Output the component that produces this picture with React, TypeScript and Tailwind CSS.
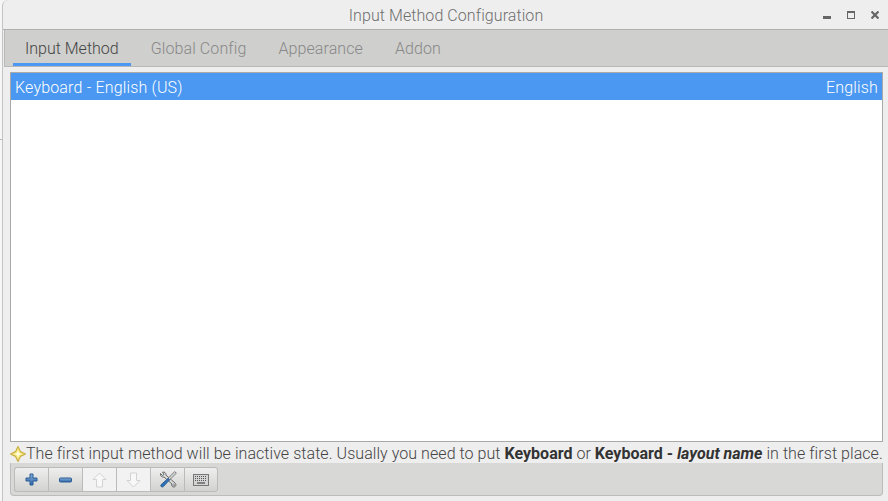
import type { ReactNode } from 'react'

const tabs = ['Input Method', 'Global Config', 'Appearance', 'Addon']

function PlusIcon() {
  return (
    <svg width="13" height="13" viewBox="0 0 13 13">
      <defs>
        <linearGradient id="blue-plus" x1="0" y1="0" x2="0" y2="1">
          <stop offset="0" stopColor="#86add8" />
          <stop offset="1" stopColor="#2c66a8" />
        </linearGradient>
      </defs>
      <path d="M5 1 H8 V5 H12 V8 H8 V12 H5 V8 H1 V5 H5 Z" fill="url(#blue-plus)" stroke="#2a5c96" strokeWidth="1" strokeLinejoin="round" />
    </svg>
  )
}

function MinusIcon() {
  return (
    <svg width="13" height="6" viewBox="0 0 13 6">
      <defs>
        <linearGradient id="blue-minus" x1="0" y1="0" x2="0" y2="1">
          <stop offset="0" stopColor="#86add8" />
          <stop offset="1" stopColor="#2c66a8" />
        </linearGradient>
      </defs>
      <rect x="0.5" y="1" width="12" height="4" rx="1" fill="url(#blue-minus)" stroke="#2a5c96" />
    </svg>
  )
}

function ArrowIcon({ down }: { down?: boolean }) {
  return (
    <svg width="15" height="16" viewBox="0 0 15 16" className={down ? 'rotate-180' : ''}>
      <path d="M7.5 1 L14 7.5 H10.5 V15 H4.5 V7.5 H1 Z" fill="#f8f8f8" stroke="#d2d2d2" strokeWidth="1" strokeLinejoin="round" />
    </svg>
  )
}

function ToolsIcon() {
  return (
    <svg width="18" height="17" viewBox="0 0 18 17">
      <path d="M1.5 2.5 L3.5 4.5 L5 3.5 L3.5 1.2 C5.5 0.5 7.2 2 7 4.2 L16 12 C17.6 13 17 16 14.8 16 C13 16 12.2 14.3 13 13 L5 6 C3 6.6 1 5 1.5 2.5 Z" fill="#dcdcdc" stroke="#6a6a6a" strokeWidth="1" strokeLinejoin="round" />
      <circle cx="14.8" cy="14" r="1" fill="#f4f4f4" stroke="#6a6a6a" strokeWidth="0.7" />
      <path d="M15.6 0.6 L17.4 2.2 L10.6 8.8 L9 7.4 Z" fill="#d4d4d4" stroke="#6a6a6a" strokeWidth="0.8" strokeLinejoin="round" />
      <path d="M9 7.4 L10.6 8.8 L4.4 15.6 C3 16.8 1 15.2 2 13.8 Z" fill="#2f73ba" stroke="#1d4f86" strokeWidth="0.8" strokeLinejoin="round" />
    </svg>
  )
}

function KeyboardIcon() {
  return (
    <svg width="16" height="12" viewBox="0 0 16 12">
      <rect x="0.5" y="0.5" width="15" height="11" fill="#d4d4d4" stroke="#777" />
      <path d="M2 2.5 H14 M2 4.5 H14 M2 6.5 H14" stroke="#555" strokeWidth="1" strokeDasharray="1 1" />
      <path d="M4 9 H12" stroke="#666" strokeWidth="1.5" />
    </svg>
  )
}

function StarIcon() {
  return (
    <svg width="16" height="16" viewBox="0 0 16 16" className="shrink-0">
      <path d="M8 0.5 L10.4 5.6 L15.5 8 L10.4 10.4 L8 15.5 L5.6 10.4 L0.5 8 L5.6 5.6 Z" fill="#f8e878" stroke="#c9b04a" strokeWidth="1.2" strokeLinejoin="round" />
      <path d="M8 4 L9 7 L12 8 L9 9 L8 12 L7 9 L4 8 L7 7 Z" fill="#fffde0" />
    </svg>
  )
}

function ToolButton({ children, disabled, first, last }: { children: ReactNode; disabled?: boolean; first?: boolean; last?: boolean }) {
  return (
    <div
      className={`flex h-[25px] w-[34px] items-center justify-center border-y border-l border-[#bbbbb9] ${first ? 'rounded-l-[3px]' : ''} ${last ? 'rounded-r-[3px] border-r' : ''} ${
        disabled ? 'bg-[#f2f2f2]' : 'bg-gradient-to-b from-[#eeeeee] to-[#d2d2d0]'
      }`}
    >
      {children}
    </div>
  )
}

export default function App() {
  return (
    <div className="flex h-[501px] w-[888px] overflow-hidden bg-[#f6f6f6] font-['Roboto',sans-serif] font-light text-[#555]">
      <div className="w-[2px] shrink-0 pt-[139px]">
        <div className="h-px bg-[#b5b5b5]" />
      </div>
      <div className="flex min-w-0 flex-1 flex-col rounded-tl-[6px] border-l border-[#c4c4c4] bg-[#eeeeee]">
        <header className="relative flex h-[30px] shrink-0 items-center justify-center border-b border-[#b0b0ae] pl-[1px] pt-[2px] text-[16px] tracking-[0.08px] text-[#6e6e6e]">
          Input Method Configuration
          <div className="absolute left-[820px] top-[11px] flex items-start gap-[16px]">
            <span className="mt-[5px] h-[3px] w-[8px] bg-[#666]" />
            <span className="h-[8px] w-[8px] border border-t-2 border-[#666]" />
            <svg width="8" height="8" viewBox="0 0 8 8">
              <path d="M0.5 0.5 L7.5 7.5 M7.5 0.5 L0.5 7.5" stroke="#666" strokeWidth="2.2" />
            </svg>
          </div>
        </header>

        <nav className="ml-[1px] flex h-[37px] shrink-0 gap-[8px] border-b border-l border-[#b8b8b6] bg-[#cfcfcd] pl-[8px]">
          {tabs.map((tab, i) => (
            <div
              key={tab}
              className={`flex h-full items-center px-[12px] text-[16px] ${i === 0 ? 'border-b-[3px] border-[#4a98f2] pt-[4px] text-[#444]' : 'pt-[1px] tracking-[0.1px] text-[#888]'}`}
            >
              {tab}
            </div>
          ))}
        </nav>

        <main className="flex min-h-0 flex-1 flex-col pl-[7px] pr-[5px] pt-[5px]">
          <div className="h-[370px] shrink-0 border border-[#a9a9a9] bg-white">
            <div className="flex h-[27px] items-center justify-between bg-[#4a98f2] px-[4px] pt-[2px] text-[16px] tracking-[0.17px] text-white">
              <span>Keyboard - English (US)</span>
              <span>English</span>
            </div>
          </div>

          <p className="flex h-[21px] shrink-0 items-center whitespace-nowrap pt-[2px] text-[16px] tracking-[0.06px] text-[#444]">
            <StarIcon />
            <span>
              The first input method will be inactive state. Usually you need to put <b className="font-bold tracking-normal text-[#333]">Keyboard</b> or{' '}
              <b className="font-bold tracking-normal text-[#333]">
                Keyboard - <i>layout name</i>
              </b>{' '}
              in the first place.
            </span>
          </p>

          <div className="flex h-[33px] shrink-0 items-start rounded-b-[4px] border-x border-b border-[#bcbcba] bg-[#d8d8d6] pl-[3px] pt-[4px]">
            <ToolButton first>
              <PlusIcon />
            </ToolButton>
            <ToolButton>
              <MinusIcon />
            </ToolButton>
            <ToolButton disabled>
              <ArrowIcon />
            </ToolButton>
            <ToolButton disabled>
              <ArrowIcon down />
            </ToolButton>
            <ToolButton>
              <ToolsIcon />
            </ToolButton>
            <ToolButton last>
              <KeyboardIcon />
            </ToolButton>
          </div>
        </main>
      </div>
    </div>
  )
}
